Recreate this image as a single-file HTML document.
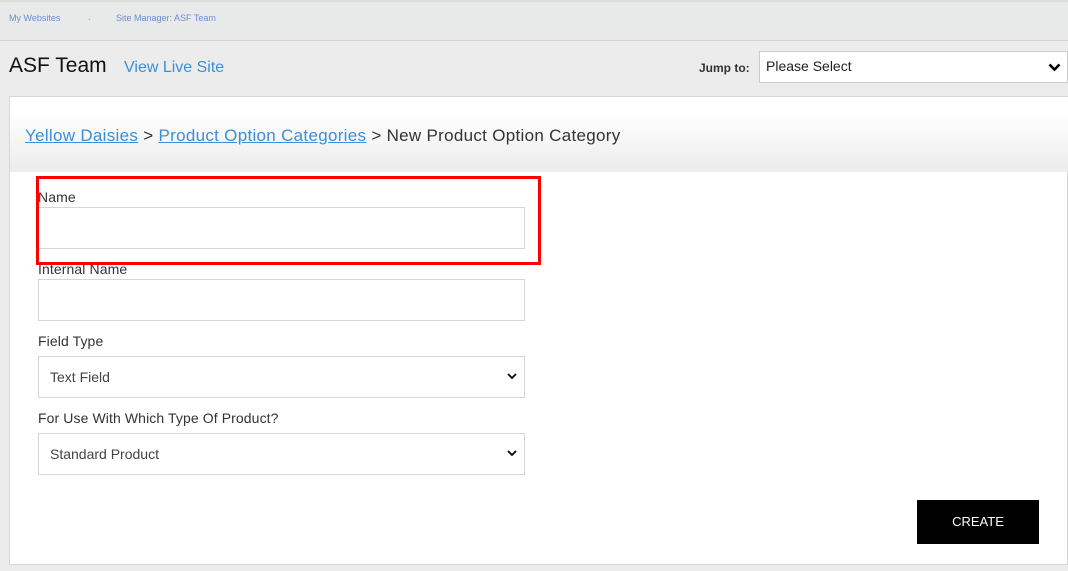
<!DOCTYPE html><html><head><style>
*{box-sizing:border-box;margin:0;padding:0}
body{width:1068px;height:571px;overflow:hidden;background:#ebeceb;font-family:"Liberation Sans",sans-serif;position:relative}
.a{position:absolute}
.lbl{font-size:14px;color:#333;left:38px;letter-spacing:0.1px}
.inp{left:38px;width:487px;height:42px;border:1px solid #d6d6d6;background:#fff}
.sel{font-size:14px;color:#444;padding:12px 0 0 11px}
.chev{position:absolute;right:7px;top:16px}
</style></head><body>
<div class="a" style="left:0;top:0;width:1068px;height:41px;background:#e8e9e9;border-bottom:1px solid #d2d3d3;border-top:2px solid #dcdcdc"></div>
<div class="a" style="left:9px;top:13px;font-size:9px;color:#6a8fd0">My Websites</div>
<div class="a" style="left:88px;top:12px;font-size:9px;color:#888">.</div>
<div class="a" style="left:116px;top:13px;font-size:9px;color:#6a8fd0">Site Manager: ASF Team</div>
<div class="a" style="left:9px;top:54px;font-size:21px;color:#111">ASF Team</div>
<div class="a" style="left:124px;top:59px;font-size:16px;color:#3a8fd8">View Live Site</div>
<div class="a" style="left:699px;top:61px;font-size:12px;font-weight:bold;color:#333">Jump to:</div>
<div class="a" style="left:759px;top:51px;width:309px;height:32px;background:#fff;border:1px solid #ccc;font-size:14px;color:#222;padding:6px 0 0 6px">Please Select
<svg class="a" style="right:6px;top:11px" width="13" height="9" viewBox="0 0 13 9"><path d="M1.5 1.5l5 5 5-5" stroke="#000" stroke-width="2.6" fill="none"/></svg></div>
<div class="a" style="left:9px;top:96px;width:1059px;height:469px;background:#fff;border:1px solid #d6d6d6"></div>
<div class="a" style="left:10px;top:97px;width:1058px;height:75px;background:linear-gradient(#fff 20%,#ececec)"></div>
<div class="a" style="left:25px;top:126px;font-size:17px;letter-spacing:0.3px;color:#333"><span style="color:#3a8fd8;text-decoration:underline">Yellow Daisies</span> &gt; <span style="color:#3a8fd8;text-decoration:underline">Product Option Categories</span> &gt; New Product Option Category</div>
<div class="a lbl" style="top:189px">Name</div>
<div class="a inp" style="top:207px"></div>
<div class="a" style="left:36px;top:176px;width:505px;height:89px;border:3px solid #f00"></div>
<div class="a lbl" style="top:261px">Internal Name</div>
<div class="a inp" style="top:279px"></div>
<div class="a lbl" style="top:333px">Field Type</div>
<div class="a inp sel" style="top:356px">Text Field<svg class="chev" width="10" height="7" viewBox="0 0 10 7"><path d="M1 1l4 4 4-4" stroke="#000" stroke-width="1.8" fill="none"/></svg></div>
<div class="a lbl" style="top:410px">For Use With Which Type Of Product?</div>
<div class="a inp sel" style="top:433px">Standard Product<svg class="chev" width="10" height="7" viewBox="0 0 10 7"><path d="M1 1l4 4 4-4" stroke="#000" stroke-width="1.8" fill="none"/></svg></div>
<div class="a" style="left:917px;top:500px;width:122px;height:44px;background:#000;color:#fff;font-size:13px;text-align:center;line-height:44px">CREATE</div>
</body></html>
